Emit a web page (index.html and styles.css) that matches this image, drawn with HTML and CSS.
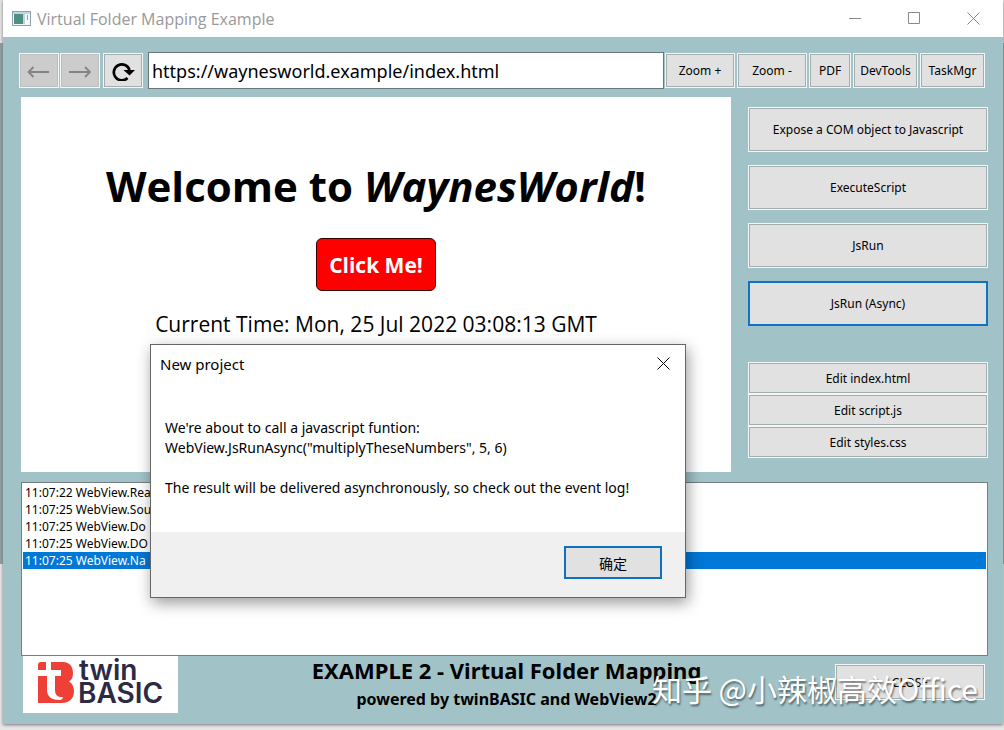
FILE: index.html
```html
<!DOCTYPE html>
<html lang="en">
<head>
    <meta charset="UTF-8">
    <meta name="viewport" content="width=device-width, initial-scale=1.0">
    <title>Virtual Folder Mapping Example</title>
    <link rel="stylesheet" href="styles.css">
</head>
<body>
    <div class="window">
        <!-- Title bar -->
        <header class="title-bar">
            <svg class="app-icon" width="20" height="16" viewBox="0 0 20 16" aria-hidden="true">
                <rect x="0.5" y="0.5" width="18" height="14" fill="#f4f8fb" stroke="#8f9fac"/>
                <rect x="1" y="1" width="17" height="2" fill="#c3d3e0"/>
                <rect x="2" y="3" width="9" height="10" fill="#4f8f83"/>
                <rect x="11" y="3" width="2" height="10" fill="#b9d5d6"/>
                <rect x="15" y="4" width="1" height="5" fill="#8f9fac"/>
            </svg>
            <span class="title">Virtual Folder Mapping Example</span>
            <div class="window-controls">
                <button aria-label="Minimize">
                    <svg width="13" height="13" viewBox="0 0 13 13"><path d="M0 6.5H12"/></svg>
                </button>
                <button aria-label="Maximize">
                    <svg width="13" height="13" viewBox="0 0 13 13"><path d="M0.5 0.5H11.5V11.5H0.5Z"/></svg>
                </button>
                <button aria-label="Close window">
                    <svg width="13" height="13" viewBox="0 0 13 13"><path d="M0.5 0.5L12.5 12.5M12.5 0.5L0.5 12.5"/></svg>
                </button>
            </div>
        </header>

        <!-- Navigation -->
        <nav class="toolbar">
            <button class="btn nav-btn" aria-label="Back" disabled>
                <svg width="24" height="14" viewBox="0 0 24 14"><path d="M1.5 8H22M6.500 3L1.5 8L6.500 13" fill="none" stroke="#838383" stroke-width="1.8"/></svg>
            </button>
            <button class="btn nav-btn" aria-label="Forward" disabled>
                <svg width="24" height="14" viewBox="0 0 24 14"><path d="M1 8H22M17 3L22 8L17 13" fill="none" stroke="#838383" stroke-width="1.8"/></svg>
            </button>
            <button class="btn nav-btn reload" aria-label="Reload">
                <svg width="24" height="20" viewBox="0 0 24 20"><path d="M16.5 17A8 8 0 1 1 18.500 9" fill="none" stroke="#000" stroke-width="2.7"/><path d="M12.5 9H24L18.5 14.5Z"/></svg>
            </button>
            <input class="address" type="text" aria-label="Address" value="https://waynesworld.example/index.html">
            <div class="tools">
                <button class="btn wide">Zoom +</button>
                <button class="btn wide">Zoom -</button>
                <button class="btn narrow">PDF</button>
                <button class="btn">DevTools</button>
                <button class="btn">TaskMgr</button>
            </div>
        </nav>

        <!-- Page and actions -->
        <main class="content">
            <section class="web-view">
                <h1>Welcome to <em>WaynesWorld</em>!</h1>
                <button class="click-me">Click Me!</button>
                <p>Current Time: Mon, 25 Jul 2022 03:08:13 GMT</p>
            </section>
            <aside class="sidebar">
                <div class="actions">
                    <button class="btn">Expose a COM object to Javascript</button>
                    <button class="btn">ExecuteScript</button>
                    <button class="btn">JsRun</button>
                    <button class="btn focused">JsRun (Async)</button>
                </div>
                <div class="edits">
                    <button class="btn">Edit index.html</button>
                    <button class="btn">Edit script.js</button>
                    <button class="btn">Edit styles.css</button>
                </div>
            </aside>
        </main>

        <!-- Event log -->
        <ul class="event-log">
            <li>11:07:22 WebView.Rea</li>
            <li>11:07:25 WebView.Sou</li>
            <li>11:07:25 WebView.Do</li>
            <li>11:07:25 WebView.DO</li>
            <li class="selected">11:07:25 WebView.Na</li>
        </ul>

        <footer class="footer">
            <svg class="logo" width="155" height="57" viewBox="0 0 155 57" role="img" aria-label="twinBASIC">
                <path fill="#ee4037" d="M15 9Q15 6 18 6H40C47 6 50 11 50 17C50 21 49 24 46 25.500C49 27 51 31 51 35C51 43 46 47 39 47H15Z"/>
                <path fill="#fff" d="M23 5H28V14H38V20H32V34Q32 40 37 41H40Q40 44 36 44C28 44 24 40 24 34V20H14V14H23Z"/>
                <text class="logo-twin" x="56" y="24">twin</text>
                <text class="logo-basic" x="55" y="47">BASIC</text>
            </svg>
            <div class="caption">
                <h2>EXAMPLE 2 - Virtual Folder Mapping</h2>
                <p>powered by twinBASIC and WebView2</p>
            </div>
            <button class="btn close-btn">CLOSE</button>
        </footer>
    </div>

    <!-- Message box -->
    <div class="dialog" role="dialog" aria-labelledby="dialog-title">
        <div class="dialog-header">
            <span id="dialog-title">New project</span>
            <button aria-label="Close dialog">
                <svg width="13" height="13" viewBox="0 0 13 13"><path d="M0.5 0.5L12.5 12.5M12.5 0.5L0.5 12.5"/></svg>
            </button>
        </div>
        <div class="dialog-body">
            <p>We're about to call a javascript funtion:<br>WebView.JsRunAsync("multiplyTheseNumbers", 5, 6)</p>
            <p>The result will be delivered asynchronously, so check out the event log!</p>
        </div>
        <div class="dialog-footer">
            <button class="ok-btn" lang="zh">确定</button>
        </div>
    </div>

    <div class="watermark" lang="zh">知乎 @小辣椒高效Office</div>
</body>
</html>
```
FILE: styles.css
```css
* {
    box-sizing: border-box;
}

body {
    margin: 0;
    padding: 0 1px 6px 3px;
    min-height: 100vh;
    display: flex;
    background: linear-gradient(#e4e4e4 43px, #8b9da0 43px, #8b9da0 564px, #e6e6e6 564px);
    font-family: "Noto Sans", "Noto Sans CJK SC", sans-serif;
    color: #000;
}

h1, h2, p, ul {
    margin: 0;
    padding: 0;
}

button, input {
    font-family: inherit;
    color: inherit;
}

/* Window */
.window {
    flex: 1;
    display: flex;
    flex-direction: column;
    background-color: #a1c3c8;
    box-shadow: 0 1px 3px #777;
}

.title-bar {
    display: flex;
    align-items: center;
    height: 37px;
    padding-left: 9px;
    background-color: #fff;
    color: #999;
    font-family: "Open Sans", sans-serif;
    font-size: 16px;
}

.title {
    flex: 1;
    margin-left: 5px;
}

.window-controls {
    display: flex;
}

.window-controls button {
    width: 59px;
    height: 37px;
    padding: 0;
    border: none;
    background: none;
}

.window-controls svg, .dialog-header svg {
    display: block;
    margin: 0 auto;
    fill: none;
    stroke: #888;
}

/* Buttons */
.btn {
    padding: 0;
    border: 1px solid #f2f7f8;
    background-color: #e1e1e1;
    box-shadow: inset 0 0 0 1px #a6adaf;
    font-size: 12px;
    white-space: nowrap;
}

.btn.focused {
    border: 2px solid #0f72c6;
    box-shadow: none;
}

/* Toolbar */
.toolbar {
    display: flex;
    align-items: center;
    gap: 1px;
    padding: 15px 18px 8px 16px;
}

.toolbar .btn {
    height: 35px;
}

.toolbar svg {
    display: block;
    margin: 0 auto;
}

.toolbar .nav-btn {
    width: 40px;
}

.nav-btn:disabled {
    background-color: #ccc;
    box-shadow: inset 0 0 0 1px #bfbfbf;
}

.toolbar .reload {
    margin: 0 4px 0 2px;
}

.address {
    flex: 1;
    min-width: 0;
    height: 37px;
    padding: 0 3px;
    border: 1px solid #687679;
    background-color: #fff;
    font-size: 18px;
}

.tools {
    display: flex;
    gap: 2px;
}

.tools .btn {
    width: 65px;
}

.tools .wide {
    width: 70px;
}

.tools .narrow {
    width: 42px;
}

/* Content */
.content {
    flex: 1;
    display: flex;
    gap: 17px;
    padding: 0 15px 10px 18px;
}

.web-view {
    flex: 1;
    display: flex;
    flex-direction: column;
    align-items: center;
    padding-top: 59px;
    background-color: #fff;
    font-family: "Open Sans", sans-serif;
}

.web-view h1 {
    font-size: 42px;
    line-height: 60px;
}

.click-me {
    width: 120px;
    height: 53px;
    margin: 22px 0 17px;
    padding: 0;
    border: 1px solid #300;
    border-radius: 6px;
    background-color: #f00;
    color: #fff;
    font-size: 21px;
    font-weight: bold;
}

.web-view p {
    font-size: 21px;
    line-height: 32px;
}

.sidebar {
    width: 240px;
    padding-top: 10px;
}

.actions, .edits {
    display: flex;
    flex-direction: column;
}

.actions {
    gap: 13px;
    margin-bottom: 36px;
}

.actions .btn {
    height: 45px;
}

.edits .btn {
    height: 32px;
}

/* Event log */
.event-log {
    height: 174px;
    margin: 0 15px 0 18px;
    padding: 1px;
    border: 1px solid #737f82;
    background-color: #fff;
    list-style: none;
    font-size: 12px;
    line-height: 17px;
}

.event-log li {
    padding-left: 2px;
}

.event-log .selected {
    background-color: #0078d7;
    color: #fff;
}

/* Footer */
.footer {
    display: flex;
    align-items: flex-start;
    height: 68px;
    padding: 0 18px 0 20px;
}

.logo {
    overflow: visible;
    background-color: #fff;
    fill: #2c2a45;
    font-family: Inter, sans-serif;
    font-weight: 600;
}

.logo-twin, .logo-basic {
    font-size: 28px;
}

.caption {
    flex: 1;
    text-align: center;
}

.caption h2 {
    font-size: 22px;
    line-height: 28px;
}

.caption p {
    font-size: 16px;
    font-weight: bold;
    line-height: 30px;
}

.close-btn {
    width: 150px;
    height: 36px;
    margin-top: 8px;
}

/* Message box */
.dialog {
    position: absolute;
    top: 344px;
    left: 150px;
    width: 536px;
    border: 1px solid #666;
    background-color: #fff;
    box-shadow: 2px 5px 14px rgba(0, 0, 0, 0.4);
    font-size: 14px;
}

.dialog-header {
    display: flex;
    align-items: center;
    justify-content: space-between;
    height: 37px;
    padding-left: 9px;
    font-size: 15px;
}

.dialog-header button {
    width: 43px;
    height: 37px;
    padding: 0;
    border: none;
    background: none;
}

.dialog-header svg {
    stroke: #000;
}

.dialog-body {
    display: flex;
    flex-direction: column;
    gap: 20px;
    padding: 36px 14px 34px;
    line-height: 20px;
}

.dialog-footer {
    display: flex;
    justify-content: flex-end;
    padding: 14px 23px 18px;
    background-color: #f0f0f0;
}

.ok-btn {
    width: 98px;
    height: 33px;
    padding: 0;
    border: 2px solid #0f72b8;
    background-color: #e1e1e1;
    font-size: 14px;
}

.watermark {
    position: absolute;
    right: 26px;
    bottom: 22px;
    color: #fff;
    font-family: "Noto Sans CJK SC", sans-serif;
    font-size: 30px;
    line-height: 40px;
    text-shadow: 1px 2px 2px rgba(0, 0, 0, 0.5);
    white-space: nowrap;
    pointer-events: none;
}
```
